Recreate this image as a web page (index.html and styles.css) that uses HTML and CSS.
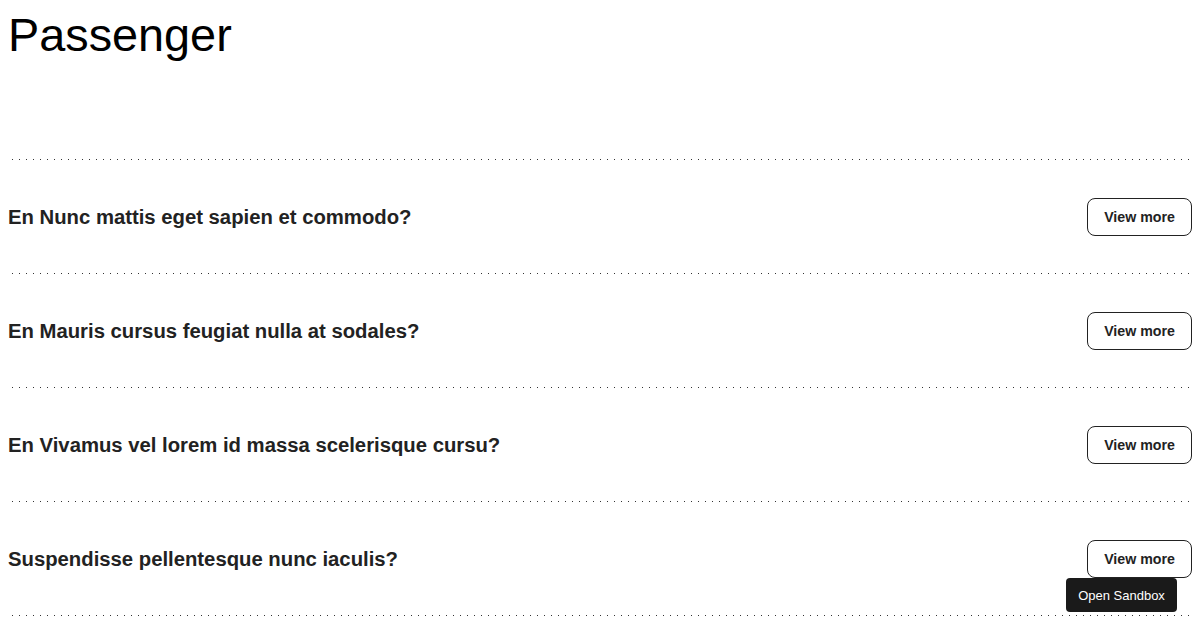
FILE: index.html
```html
<!DOCTYPE html>
<html lang="en">
<head>
<meta charset="utf-8">
<title>Passenger</title>
<link rel="stylesheet" href="styles.css">
</head>
<body>
<h1 class="title">Passenger</h1>
<div class="faq">
  <div class="faq-item">
    <h2 class="question">En Nunc mattis eget sapien et commodo?</h2>
    <button class="more">View more</button>
  </div>
  <div class="faq-item">
    <h2 class="question">En Mauris cursus feugiat nulla at sodales?</h2>
    <button class="more">View more</button>
  </div>
  <div class="faq-item">
    <h2 class="question">En Vivamus vel lorem id massa scelerisque cursu?</h2>
    <button class="more">View more</button>
  </div>
  <div class="faq-item">
    <h2 class="question">Suspendisse pellentesque nunc iaculis?</h2>
    <button class="more">View more</button>
  </div>
  <div class="faq-end"></div>
</div>
<button class="sandbox">Open Sandbox</button>
</body>
</html>
```
FILE: styles.css
```css
body {
  margin: 8px;
  font-family: "Liberation Sans", Arial, sans-serif;
  color: #222;
  background: #fff;
}
.title {
  margin: 0 0 96px;
  font-size: 46.8px;
  font-weight: 400;
  line-height: 55px;
  color: #000;
}
.faq {
  display: flex;
  flex-direction: column;
}
.faq-item,
.faq-end {
  background-image: linear-gradient(to right, #333 1px, transparent 1px);
  background-size: 7px 1px;
  background-repeat: repeat-x;
  background-position: 4px 0;
}
.faq-item {
  display: flex;
  align-items: center;
  justify-content: space-between;
  padding: 39px 0 37px;
}
.faq-end {
  height: 1px;
}
.question {
  margin: 0;
  font-size: 20.3px;
  font-weight: 700;
  line-height: 24px;
  color: #222;
}
.more {
  height: 38px;
  width: 105px;
  padding: 0;
  border: 1px solid #222;
  border-radius: 8px;
  background: #fff;
  font-family: "Liberation Sans", Arial, sans-serif;
  font-size: 14.2px;
  font-weight: 700;
  color: #222;
}
.sandbox {
  position: fixed;
  right: 23px;
  bottom: 18px;
  width: 111px;
  height: 34px;
  padding: 0;
  border: none;
  border-radius: 4px;
  background: #1a1a1a;
  color: #fff;
  font-family: "Liberation Sans", Arial, sans-serif;
  font-size: 13px;
}
```
